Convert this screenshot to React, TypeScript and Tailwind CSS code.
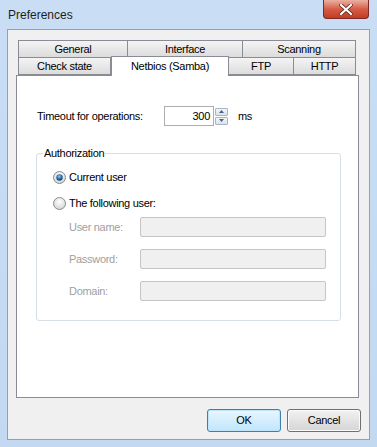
import React from "react";

const font = { fontFamily: '"Liberation Sans", Arial, sans-serif' };

function Radio({ checked }: { checked?: boolean }) {
  return (
    <svg width="13" height="13" viewBox="0 0 13 13" className="shrink-0">
      <defs>
        <radialGradient id={checked ? "rg1" : "rg0"} cx="50%" cy="35%" r="60%">
          <stop offset="0%" stopColor="#ffffff" />
          <stop offset="100%" stopColor="#d4d6d8" />
        </radialGradient>
        <radialGradient id="dot" cx="45%" cy="35%" r="65%">
          <stop offset="0%" stopColor="#8ad0f8" />
          <stop offset="55%" stopColor="#2a6fb0" />
          <stop offset="100%" stopColor="#133a68" />
        </radialGradient>
      </defs>
      <circle cx="6.5" cy="6.5" r="6" fill={`url(#${checked ? "rg1" : "rg0"})`} stroke="#8a8c8e" />
      {checked && <circle cx="6.5" cy="6.5" r="3.2" fill="url(#dot)" />}
    </svg>
  );
}

function Tab({ label, w, selected }: { label: string; w: number; selected?: boolean }) {
  if (selected) {
    return (
      <div
        className="relative z-10 -mt-[2px] -mb-px flex h-[20px] items-start justify-center border border-b-0 border-[#898c95] bg-white pt-[1px] text-[11px] text-black"
        style={{ width: w }}
      >
        {label}
      </div>
    );
  }
  return (
    <div
      className="-ml-px flex h-[18px] items-center justify-center border border-[#898c95] bg-gradient-to-b from-[#f4f4f4] to-[#dcdcdc] text-[11px] text-black first:ml-0"
      style={{ width: w }}
    >
      {label}
    </div>
  );
}

function FieldRow({ label }: { label: string }) {
  return (
    <div className="flex items-center">
      <span className="w-[71px] pl-[32px] box-content text-[11px] text-[#a0a0a0]">{label}</span>
      <div className="h-[20px] w-[186px] rounded-[2px] border border-[#c5c5c5] bg-[#f0f0f0]" />
    </div>
  );
}

export default function App() {
  return (
    <div
      className="flex h-[447px] w-[377px] flex-col bg-gradient-to-b from-[#c9def4] to-[#c2d9f1] px-[7px] pb-[7px] tracking-[-0.3px]"
      style={font}
    >
      {/* title bar */}
      <div className="flex h-[29px] items-start justify-between">
        <span className="pl-[1px] pt-[7px] text-[12px] leading-[16px] tracking-normal text-[#1e1e1e]">Preferences</span>
        <div className="mr-px flex h-[19px] w-[46px] items-center justify-center rounded-b-[4px] border border-t-0 border-[#7a2a22] bg-gradient-to-b from-[#eab0a2] via-[#d65c45] to-[#c23c26]">
          <svg width="14" height="11" viewBox="0 0 14 11">
            <path
              d="M2 1 L12 10 M12 1 L2 10"
              stroke="#5a1a12"
              strokeWidth="3.6"
              strokeLinecap="square"
            />
            <path
              d="M2 1 L12 10 M12 1 L2 10"
              stroke="#ffffff"
              strokeWidth="2.2"
              strokeLinecap="square"
            />
          </svg>
        </div>
      </div>

      {/* client area */}
      <div className="flex flex-1 flex-col border border-[#8da2b9] bg-[#f0f0f0] pt-[10px]">
        <div className="ml-[8px] w-[343px]">
          {/* tabs */}
          <div className="flex pl-[2px]">
            <Tab label="General" w={110} />
            <Tab label="Interface" w={116} />
            <Tab label="Scanning" w={114} />
          </div>
          <div className="-mt-px flex items-end pl-[2px]">
            <Tab label="Check state" w={93} />
            <Tab label="Netbios (Samba)" w={118} selected />
            <Tab label="FTP" w={66} />
            <Tab label="HTTP" w={63} />
          </div>

          {/* panel */}
          <div className="h-[323px] border border-[#898c95] bg-white pl-[19px] pt-[30px] text-[11px] text-black">
            <div className="flex h-[20px] items-center pl-px">
              <span className="w-[127px]">Timeout for operations:</span>
              <div className="flex h-[20px] w-[50px] items-center justify-end border border-[#abadb3] pr-[3px]">
                300
              </div>
              <div className="flex h-[20px] w-[14px] flex-col justify-center gap-px pl-px">
                <div className="flex h-[8px] items-center justify-center rounded-[1px] border border-[#a9b5c3] bg-gradient-to-b from-[#f2f6fa] to-[#d8e2ec]">
                  <svg width="5" height="3" viewBox="0 0 5 3">
                    <path d="M0 3 L2.5 0 L5 3 Z" fill="#4d6185" />
                  </svg>
                </div>
                <div className="flex h-[8px] items-center justify-center rounded-[1px] border border-[#a9b5c3] bg-gradient-to-b from-[#f2f6fa] to-[#d8e2ec]">
                  <svg width="5" height="3" viewBox="0 0 5 3">
                    <path d="M0 0 L2.5 3 L5 0 Z" fill="#4d6185" />
                  </svg>
                </div>
              </div>
              <span className="ml-[10px]">ms</span>
            </div>

            {/* group box */}
            <div className="relative mt-[27px] h-[168px] w-[305px] rounded-[3px] border border-[#d5dfe5] pt-[15px]">
              <span className="absolute -top-[8px] left-[6px] bg-white px-px leading-[14px]">
                Authorization
              </span>
              <div className="flex flex-col gap-[10px] pl-[16px]">
                <div className="flex h-[16px] items-center gap-[3px]">
                  <Radio checked />
                  <span>Current user</span>
                </div>
                <div className="flex h-[16px] items-center gap-[3px]">
                  <Radio />
                  <span>The following user:</span>
                </div>
              </div>
              <div className="mt-[6px] flex flex-col gap-[12px]">
                <FieldRow label="User name:" />
                <FieldRow label="Password:" />
                <FieldRow label="Domain:" />
              </div>
            </div>
          </div>
        </div>

        {/* buttons */}
        <div className="mt-[11px] flex justify-end gap-[6px] pr-[8px]">
          <button className="h-[23px] w-[74px] rounded-[3px] border border-[#3c7fb1] bg-gradient-to-b from-[#eaf6fd] to-[#bee6fd] text-[11px] text-black shadow-[inset_0_0_0_1px_#bfe4f8]">
            OK
          </button>
          <button className="h-[23px] w-[74px] rounded-[3px] border border-[#707070] bg-gradient-to-b from-[#f2f2f2] to-[#d5d5d5] text-[11px] text-black shadow-[inset_0_0_0_1px_#fbfbfb]">
            Cancel
          </button>
        </div>
      </div>
    </div>
  );
}
